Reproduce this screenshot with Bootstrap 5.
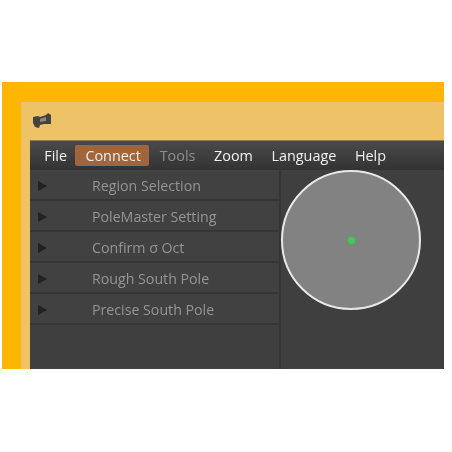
<!DOCTYPE html>
<html lang="en">
<head>
  <meta charset="UTF-8" />
  <meta name="viewport" content="width=device-width, initial-scale=1.0"/>
  <link href="https://cdn.jsdelivr.net/npm/bootstrap@5.3.5/dist/css/bootstrap.min.css" rel="stylesheet"/>
  <title>PoleMaster</title>
  <style>
    body {
      background: #fff;
      font-family: "Open Sans", "Noto Sans", sans-serif;
    }
    .shot {
      width: 442px;
      height: 287px;
      margin: 82px 0 0 2px;
      padding: 20px 0 0 19px;
      background: #fdb602;
      filter: blur(.7px);
    }
    .app-window {
      height: 100%;
      background: #eec368;
      padding-left: 9px;
      display: flex;
      flex-direction: column;
    }
    .app-title {
      height: 38px;
      padding: 5px 0 0 2px;
    }
    .app-body {
      flex: 1;
      background: #3f3f3f;
      display: flex;
      flex-direction: column;
      min-height: 0;
      border-top: 1px solid #8d7c4f;
    }
    .app-menu {
      height: 29px;
      background: linear-gradient(#4a4a4a, #333);
      font-size: 14.4px;
      color: #f0f0f0;
      padding-left: 5px;
    }
    .app-menu span {
      padding: 0 9.3px;
      line-height: 21px;
      border-radius: 2px;
      white-space: nowrap;
    }
    .app-menu .on {
      background: #a0653a;
      color: #eee;
      margin-left: -1px;
      margin-right: 1px;
      padding: 0 8.5px 0 10px;
    }
    .app-menu .off { color: #8e8e8e; }
    .side {
      width: 251px;
      border-right: 2px solid #363636;
    }
    .side-row {
      height: 31px;
      border-bottom: 2px solid #363636;
      background: #414141;
      color: #959595;
      font-size: 14.2px;
      padding: 2px 0 0 8px;
    }
    .side-row i {
      width: 0;
      height: 0;
      border-left: 9px solid #222;
      border-top: 5px solid transparent;
      border-bottom: 5px solid transparent;
      margin-right: 45px;
    }
    .side-row span { white-space: nowrap; }
    .scope {
      width: 140px;
      height: 140px;
      border-radius: 50%;
      background: #828282;
      border: 2px solid #e8e8e8;
    }
    .scope-dot {
      width: 7px;
      height: 7px;
      border-radius: 50%;
      background: #3fce4f;
      box-shadow: 0 0 4px #5fa765;
    }
  </style>
</head>
<body class="m-0">
  <div class="shot">
    <div class="app-window">
      <div class="app-title">
        <svg width="20" height="18" viewBox="0 0 20 18">
          <path d="M1 5 L6 4 L8 5 L14 3 L16 1 L19 3 L19 12 L12 12 L8 13 L7 16 L3 15 L1 11 Z" fill="#45433c"/>
          <path d="M8 7 L14 5 L14 9 L8 10 Z" fill="#8b8878"/>
        </svg>
      </div>
      <div class="app-body">
        <div class="app-menu d-flex align-items-center">
          <span>File</span>
          <span class="on">Connect</span>
          <span class="off">Tools</span>
          <span>Zoom</span>
          <span>Language</span>
          <span>Help</span>
        </div>
        <div class="d-flex flex-grow-1">
          <div class="side">
            <div class="side-row d-flex align-items-center"><i></i><span>Region Selection</span></div>
            <div class="side-row d-flex align-items-center"><i></i><span>PoleMaster Setting</span></div>
            <div class="side-row d-flex align-items-center"><i></i><span>Confirm σ Oct</span></div>
            <div class="side-row d-flex align-items-center"><i></i><span>Rough South Pole</span></div>
            <div class="side-row d-flex align-items-center"><i></i><span>Precise South Pole</span></div>
          </div>
          <div class="flex-grow-1">
            <div class="scope d-flex align-items-center justify-content-center">
              <div class="scope-dot"></div>
            </div>
          </div>
        </div>
      </div>
    </div>
  </div>
  <script src="https://cdn.jsdelivr.net/npm/bootstrap@5.3.5/dist/js/bootstrap.bundle.min.js"></script>
</body>
</html>
